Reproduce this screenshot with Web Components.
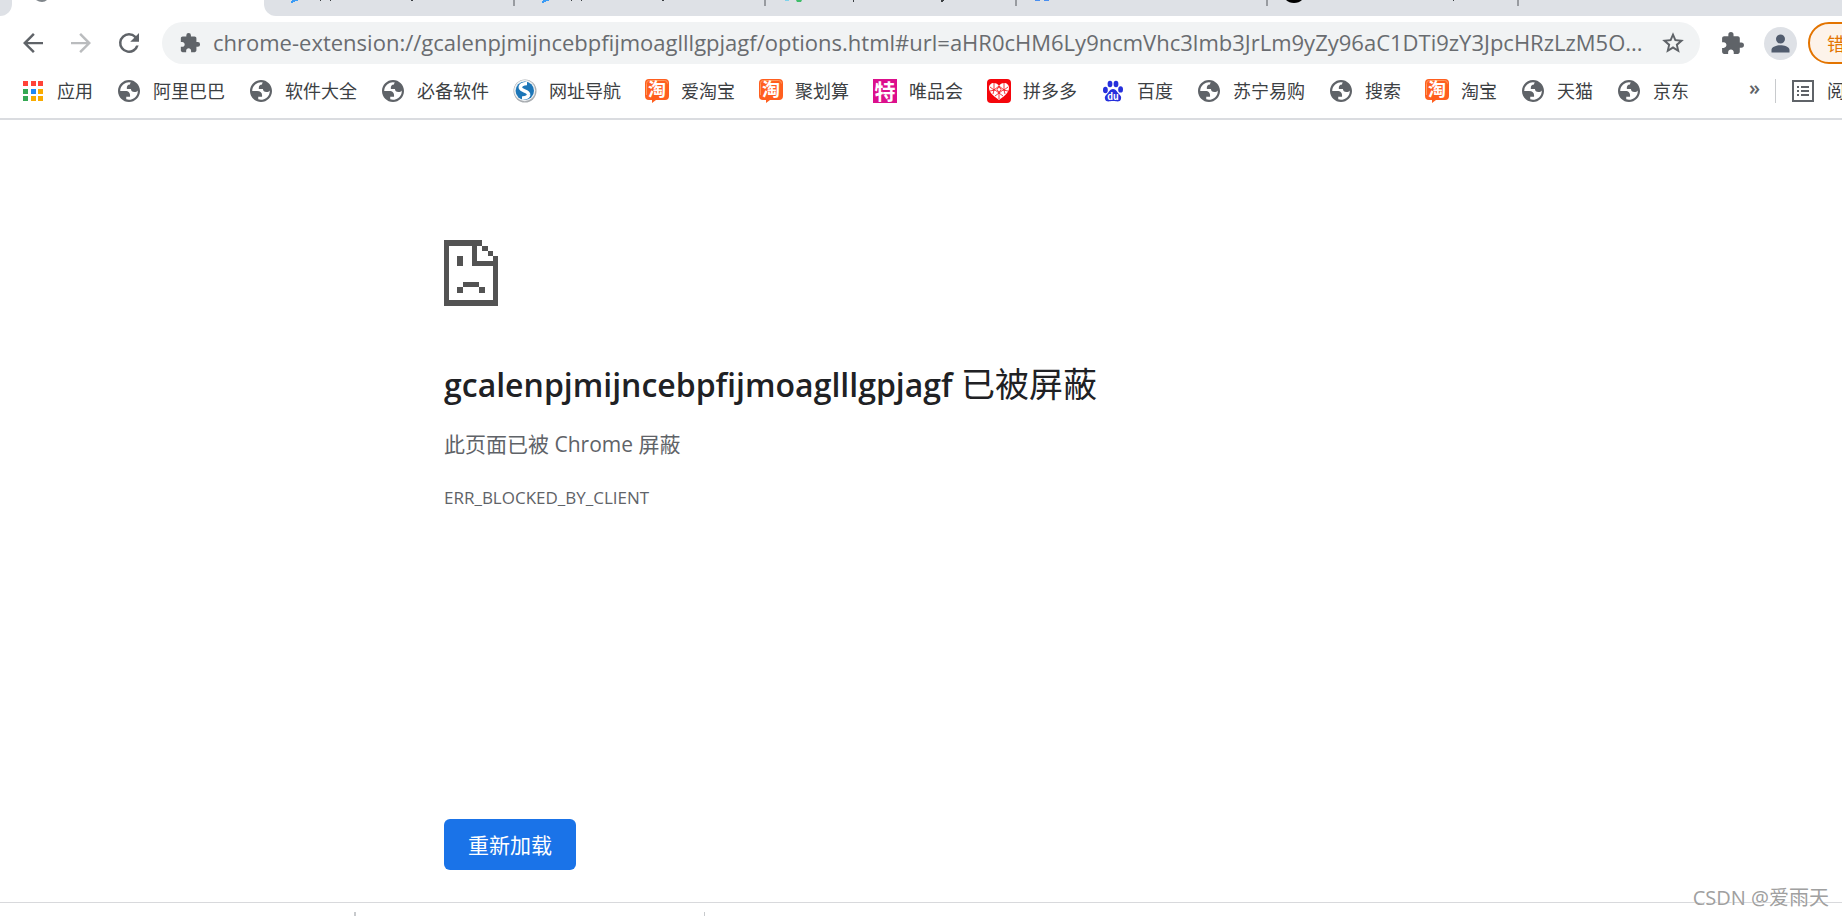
<!DOCTYPE html>
<html lang="zh-CN">
<head>
<meta charset="utf-8">
<title>gcalenpjmijncebpfijmoaglllgpjagf</title>
<style>
  html, body {
    margin: 0;
    height: 100%;
  }

  body {
    --icon: #5f6368;
    --line: #dadce0;
    --strip: #dee1e6;
    font-family: "Open Sans", "Noto Sans CJK SC", sans-serif;
    color: #3c4043;
    background: #fff;
    overflow: hidden;
  }
</style>
</head>
<body>
<browser-window>
  <tab-strip slot="chrome"></tab-strip>
  <nav-toolbar slot="chrome"></nav-toolbar>
  <bookmarks-bar slot="chrome">
    <bookmark-item icon="apps">应用</bookmark-item>
    <bookmark-item icon="globe">阿里巴巴</bookmark-item>
    <bookmark-item icon="globe">软件大全</bookmark-item>
    <bookmark-item icon="globe">必备软件</bookmark-item>
    <bookmark-item icon="sogou">网址导航</bookmark-item>
    <bookmark-item icon="taobao">爱淘宝</bookmark-item>
    <bookmark-item icon="taobao">聚划算</bookmark-item>
    <bookmark-item icon="vip">唯品会</bookmark-item>
    <bookmark-item icon="pdd">拼多多</bookmark-item>
    <bookmark-item icon="baidu">百度</bookmark-item>
    <bookmark-item icon="globe">苏宁易购</bookmark-item>
    <bookmark-item icon="globe">搜索</bookmark-item>
    <bookmark-item icon="taobao">淘宝</bookmark-item>
    <bookmark-item icon="globe">天猫</bookmark-item>
    <bookmark-item icon="globe">京东</bookmark-item>
    <bookmark-item slot="end" icon="list">阅</bookmark-item>
  </bookmarks-bar>
  <error-page>
    <span slot="host">gcalenpjmijncebpfijmoaglllgpjagf</span>
    <span slot="status">已被屏蔽</span>
    <span slot="message">此页面已被 Chrome 屏蔽</span>
    <span slot="code">ERR_BLOCKED_BY_CLIENT</span>
    <span slot="action">重新加载</span>
  </error-page>
  <download-shelf slot="footer"></download-shelf>
  <water-mark slot="footer">CSDN @爱雨天</water-mark>
</browser-window>

<script>
// Every icon is drawn in a 24x24 box
const ICONS = {
  back: '<path fill="currentColor" d="M20 11.1H7.7l5.7-5.7L12 4l-8 8 8 8 1.4-1.4-5.7-5.7H20z"/>',
  forward: '<path fill="currentColor" d="M4 11.1h12.3l-5.7-5.7L12 4l8 8-8 8-1.4-1.4 5.7-5.7H4z"/>',
  reload: '<path fill="currentColor" d="M17.65 6.35A7.96 7.96 0 0 0 12 4a8 8 0 1 0 7.73 10h-2.08A6 6 0 1 1 12 6c1.66 0 3.14.69 4.22 1.78L13 11h7V4l-2.35 2.35z"/>',
  puzzle: '<path fill="currentColor" d="M20.5 11H19V7c0-1.1-.9-2-2-2h-4V3.5a2.5 2.5 0 0 0-5 0V5H4c-1.1 0-1.99.9-1.99 2v3.8H3.5c1.49 0 2.7 1.21 2.7 2.7s-1.21 2.7-2.7 2.7H2V20c0 1.1.9 2 2 2h3.8v-1.5c0-1.49 1.21-2.7 2.7-2.7s2.7 1.21 2.7 2.7V22H17c1.1 0 2-.9 2-2v-4h1.5a2.5 2.5 0 0 0 0-5z"/>',
  star: '<path fill="currentColor" fill-rule="evenodd" d="M22 9.24l-7.19-.62L12 2 9.19 8.63 2 9.24l5.46 4.73L5.82 21 12 17.27 18.18 21l-1.63-7.03L22 9.24zM12 15.1l-3.5 2.1.95-3.95-3.1-2.7 4.1-.35L12 6.5l1.55 3.7 4.1.35-3.1 2.7.95 3.95L12 15.1z"/>',
  person: '<path fill="currentColor" d="M12 12a4 4 0 1 0 0-8 4 4 0 0 0 0 8zm0 1.5c-2.7 0-8 1.3-8 4V20h16v-2.5c0-2.7-5.3-4-8-4z"/>',
  apps: `
    <path fill="#ff4338" d="M2 2h5v5H2zM10 2h5v5h-5zM17 2h5v5h-5z"/>
    <path fill="#34a853" d="M2 10h5v5H2zM2 17h5v5H2z"/>
    <path fill="#1e88f5" d="M10 10h5v5h-5z"/>
    <path fill="#f9ab00" d="M17 10h5v5h-5zM10 17h5v5h-5zM17 17h5v5h-5z"/>`,
  globe: '<path fill="#5f6368" fill-rule="evenodd" transform="translate(-1.2 -1.2) scale(1.1)" d="M12 2C6.48 2 2 6.48 2 12s4.48 10 10 10 10-4.48 10-10S17.52 2 12 2zM4 12h4.4c3.407.022 4.922 1.73 4.543 5.127H9.488v2.47a8.004 8.004 0 0 0 10.498-8.083C19.327 12.504 18.332 13 17 13c-2.137 0-3.206-.916-3.206-2.75h-3.748c-.274-2.728.683-4.092 2.87-4.092 0-.975.327-1.597.811-1.97A8.004 8.004 0 0 0 4 12z"/>',
  sogou: `
    <circle cx="12" cy="12" r="11.5" fill="#a9adb1"/>
    <circle cx="11.7" cy="11.6" r="10.6" fill="#eef1f3"/>
    <circle cx="11.8" cy="11.8" r="9.2" fill="#1c76b8"/>
    <path fill="none" stroke="#fff" stroke-width="3.6" d="M14 4.5C10 4.500 6.500 6.400 7.600 9.400c1 2.600 7.800 2.600 8 6 .2 2.400-3 3.800-6.600 3.600"/>`,
  taobao: `
    <path fill="#ff5f1f" d="M4 0h16q4 0 4 4v13q0 4-4 4h-9l-4 3v-3H4q-4 0-4-4V4q0-4 4-4z"/>
    <path fill="none" stroke="#ff9a5c" d="M1.5 16V4.5q0-3 3-3h15q3 0 3 3"/>
    <text x="12" y="17" font-size="18" font-weight="700" text-anchor="middle" fill="#fff">淘</text>`,
  vip: `
    <path fill="#dc0f8c" d="M0 0h24v24H0z"/>
    <text x="12" y="19.5" font-size="21" font-weight="700" text-anchor="middle" fill="#fff">特</text>`,
  pdd: `
    <rect width="24" height="24" rx="4" fill="#f5060c"/>
    <path fill="#fff" d="M12 21C8 18 2 14 2 9c0-3 2-5 5-5 2 0 4 1 5 3 1-2 3-3 5-3 3 0 5 2 5 5 0 5-6 9-10 12z"/>
    <path fill="none" stroke="#f5060c" stroke-width=".8" d="M3 8l4 3 5-4 5 4 4-3M3 12l5-1 4 3 4-3 5 1M7 4v7l-1 4M17 4v7l1 4M8 17l4-3 4 3M12 7v13"/>
    <circle cx="12" cy="10.5" r="2" fill="#fff" stroke="#f5060c" stroke-width=".8"/>`,
  baidu: `
    <g fill="#2630dc">
      <ellipse cx="4.4" cy="11" rx="2.4" ry="3.2"/>
      <ellipse cx="9" cy="5" rx="2.4" ry="3.2"/>
      <ellipse cx="15" cy="5" rx="2.4" ry="3.2"/>
      <ellipse cx="19.6" cy="10.4" rx="2.4" ry="3.2"/>
      <path d="M12 10c-3 0-4 3-6 5-1.8 1.7-2.6 3-2 5 .7 2.6 3 2.6 5 2.3 2-.3 4-.3 6 0s4.3.3 5-2.3c.6-2-.4-3.400-2-5-2-2-3-5-6-5z"/>
    </g>
    <text x="12" y="20.5" font-size="9" font-weight="700" text-anchor="middle" fill="#fff">du</text>`,
  list: `
    <path fill="none" stroke="#5f6368" stroke-width="2" d="M2 2h20v20H2z"/>
    <path fill="#5f6368" d="M6 7h2v2H6zM6 11h2v2H6zM6 15h2v2H6zM10 7h8v2h-8zM10 11h8v2h-8zM10 15h8v2h-8z"/>`
};

function icon(name, size = 24) {
  return `<svg viewBox="0 0 24 24" width="${size}" height="${size}" aria-hidden="true">${ICONS[name]}</svg>`;
}

// Shared base: renders styles and markup into an open shadow root
class BaseElement extends HTMLElement {
  constructor() {
    super();
    this.attachShadow({ mode: 'open' });
  }

  connectedCallback() {
    this.shadowRoot.innerHTML = `
      <style>
        * { box-sizing: border-box; }
        svg { display: block; flex: none; overflow: visible; }
        button { border: 0; padding: 0; background: none; color: inherit; font: inherit; cursor: pointer; }
        ${this.styles()}
      </style>
      ${this.markup()}
    `;
  }
}

class BrowserWindow extends BaseElement {
  styles() {
    return `
      :host {
        display: flex;
        flex-direction: column;
        height: 100vh;
        position: relative;
      }
      main { flex: 1; min-height: 0; overflow: hidden; }
    `;
  }

  markup() {
    return '<slot name="chrome"></slot><main><slot></slot></main><slot name="footer"></slot>';
  }
}

class TabStrip extends BaseElement {
  styles() {
    return `
      :host {
        display: flex;
        height: 16px;
        overflow: hidden;
      }
      .before {
        width: 12px;
        background: var(--strip);
        border-bottom-right-radius: 12px;
      }
      .active { width: 252px; }
      .others {
        display: flex;
        flex: 1;
        background: var(--strip);
        border-bottom-left-radius: 12px;
      }
      .tab {
        display: flex;
        justify-content: space-between;
        width: 251px;
        height: 6px;
      }
      .tab::after {
        content: "";
        width: 2px;
        background: #989ba0;
      }
    `;
  }

  markup() {
    // Only the lowest pixels of each favicon and title are on screen
    const tabs = [
      '<path fill="#3b9bf5" d="M28 0h6v1h-3v1h-2v1h-2V1h1z"/><path fill="#3c4043" d="M56 0h1v1h-1zM66 0h1v1h-1zM147 0h2v1h-2z"/>',
      '<path fill="#3b9bf5" d="M28 0h6v1h-3v1h-2v1h-2V1h1z"/><path fill="#3c4043" d="M56 0h1v1h-1zM66 0h1v1h-1zM147 0h2v1h-2z"/>',
      '<path fill="#7fd3ec" d="M19 0h4v1h-4z"/><path fill="#3fbd6a" d="M30 0h6l-1 2h-4z"/><path fill="#3c4043" d="M87 0h1v2h-1zM175 0h3v1h-1v1h-2z"/>',
      '<path fill="#4a8ff0" d="M18 0h5v1h-5zM27 0h5v1h-5z"/>',
      '<path fill="#000" d="M18 0h16q-3 3-8 3t-8-3z"/><path fill="#3c4043" d="M185 0h1v1h-1z"/>'
    ];
    return `
      <div class="before"></div>
      <div class="active"><svg width="60" height="6"><path fill="#80868b" d="M24 0h11q-2 2-5 2t-6-2z"/></svg></div>
      <div class="others">
        ${tabs.map((marks) => `<div class="tab"><svg width="240" height="6">${marks}</svg></div>`).join('')}
      </div>
    `;
  }
}

class NavToolbar extends BaseElement {
  styles() {
    return `
      :host {
        display: flex;
        align-items: center;
        gap: 18px;
        height: 54px;
        padding: 0 0 0 18px;
        color: var(--icon);
      }
      .forward { color: #babcbe; }
      .omnibox {
        display: flex;
        flex: 1;
        align-items: center;
        min-width: 0;
        height: 42px;
        padding: 0 14px 0 17px;
        border-radius: 21px;
        background: #f1f3f4;
      }
      input {
        flex: 1;
        min-width: 0;
        height: 34px;
        margin: 0 12px;
        padding: 0 0 2px;
        border: 0;
        outline: 0;
        background: none;
        color: #696c70;
        font: inherit;
        font-size: 22px;
      }
      .actions {
        display: flex;
        align-items: center;
        padding-left: 2px;
      }
      .avatar {
        display: grid;
        place-items: center;
        width: 33px;
        height: 33px;
        margin: 0 11px 0 19px;
        border-radius: 50%;
        background: var(--strip);
        color: #515c6e;
      }
      .update {
        width: 74px;
        height: 42px;
        margin-right: -40px;
        padding-left: 17px;
        border: 2px solid #e37400;
        border-radius: 21px;
        background: #fdf3ea;
        color: #e37400;
        font-size: 18px;
        text-align: left;
      }
    `;
  }

  markup() {
    return `
      <button aria-label="Back">${icon('back', 30)}</button>
      <button class="forward" aria-label="Forward">${icon('forward', 30)}</button>
      <button aria-label="Reload">${icon('reload', 30)}</button>
      <div class="omnibox">
        ${icon('puzzle', 22)}
        <input type="text" aria-label="Address" spellcheck="false" value="chrome-extension://gcalenpjmijncebpfijmoaglllgpjagf/options.html#url=aHR0cHM6Ly9ncmVhc3lmb3JrLm9yZy96aC1DTi9zY3JpcHRzLzM5O...">
        <button aria-label="Bookmark">${icon('star', 26)}</button>
      </div>
      <div class="actions">
        <button aria-label="Extensions">${icon('puzzle', 25)}</button>
        <button class="avatar" aria-label="Profile">${icon('person', 27)}</button>
        <button class="update">错</button>
      </div>
    `;
  }
}

class BookmarksBar extends BaseElement {
  styles() {
    return `
      :host {
        display: flex;
        align-items: center;
        height: 50px;
        padding: 0 0 6px 21px;
        box-sizing: border-box;
        border-bottom: 2px solid var(--line);
      }
      .items {
        display: flex;
        flex: 1;
        gap: 24px;
        min-width: 0;
      }
      .end {
        display: flex;
        align-items: center;
        margin-right: -3px;
      }
      .more {
        height: 28px;
        color: var(--icon);
        font-size: 20px;
        font-weight: 600;
        line-height: 20px;
        padding-bottom: 6px;
      }
      .rule {
        width: 1px;
        height: 24px;
        margin: 0 15px;
        background: #c8cacd;
      }
    `;
  }

  markup() {
    return `
      <nav class="items"><slot></slot></nav>
      <div class="end">
        <button class="more" aria-label="More bookmarks">»</button>
        <span class="rule"></span>
        <slot name="end"></slot>
      </div>
    `;
  }
}

class BookmarkItem extends BaseElement {
  styles() {
    return `
      :host { display: block; flex: none; }
      a {
        display: flex;
        align-items: center;
        gap: 12px;
        color: inherit;
        font-size: 18px;
        line-height: 26px;
        text-decoration: none;
        white-space: nowrap;
      }
      svg { font-family: "Noto Sans CJK SC", sans-serif; }
    `;
  }

  markup() {
    return `<a href="#">${icon(this.getAttribute('icon'))}<span><slot></slot></span></a>`;
  }
}

class ErrorPage extends BaseElement {
  styles() {
    return `
      :host {
        display: block;
        max-width: 954px;
        margin: 0 auto;
        padding-top: 120px;
        color: #5f6368;
      }
      h1 {
        margin: 56px 0 0;
        color: #202124;
        font-size: 32px;
        font-weight: 600;
        line-height: 44px;
      }
      .status {
        font-size: 34px;
        font-weight: 400;
      }
      p {
        margin: 21px 0 0;
        font-size: 21px;
        line-height: 32px;
      }
      .code {
        margin-top: 24px;
        font-size: 17px;
        line-height: 28px;
      }
      button {
        height: 51px;
        margin-top: 307px;
        padding: 0 24px 2px;
        border-radius: 6px;
        background: #1a73e8;
        color: #fff;
        font-size: 21px;
      }
    `;
  }

  markup() {
    return `
      <svg viewBox="0 0 162 196" width="54" height="66" shape-rendering="crispEdges" aria-hidden="true">
        <path fill="#535353" d="M0 0h115v16H99v47h48V47h15v149H0zM16 16v164h131V78H84V16z" fill-rule="evenodd"/>
        <path fill="#535353" d="M115 16h16v16h-16zM131 32h16v15h-16zM40 47h16v31H40zM56 126h50v15H56zM40 141h16v16H40zM106 141h16v16h-16z"/>
      </svg>
      <h1><slot name="host"></slot> <span class="status"><slot name="status"></slot></span></h1>
      <p><slot name="message"></slot></p>
      <p class="code"><slot name="code"></slot></p>
      <button><slot name="action"></slot></button>
    `;
  }
}

class DownloadShelf extends BaseElement {
  styles() {
    return `
      :host {
        display: flex;
        height: 14px;
        padding-top: 9px;
        box-sizing: border-box;
        border-top: 1px solid #d8d9dc;
        background: #fff;
      }
      .item { width: 349px; border-right: 1px solid #c8cacd; }
      .item:first-of-type { width: 356px; border-right-width: 2px; }
    `;
  }

  markup() {
    return '<div class="item"></div><div class="item"></div>';
  }
}

class WaterMark extends BaseElement {
  styles() {
    return `
      :host {
        position: absolute;
        right: 13px;
        bottom: 4px;
        color: #a0a0a0;
        font-size: 20px;
        line-height: 28px;
        text-shadow: -1px -1px 0 #fff;
      }
    `;
  }

  markup() {
    return '<slot></slot>';
  }
}

customElements.define('browser-window', BrowserWindow);
customElements.define('tab-strip', TabStrip);
customElements.define('nav-toolbar', NavToolbar);
customElements.define('bookmarks-bar', BookmarksBar);
customElements.define('bookmark-item', BookmarkItem);
customElements.define('error-page', ErrorPage);
customElements.define('download-shelf', DownloadShelf);
customElements.define('water-mark', WaterMark);
</script>
</body>
</html>
